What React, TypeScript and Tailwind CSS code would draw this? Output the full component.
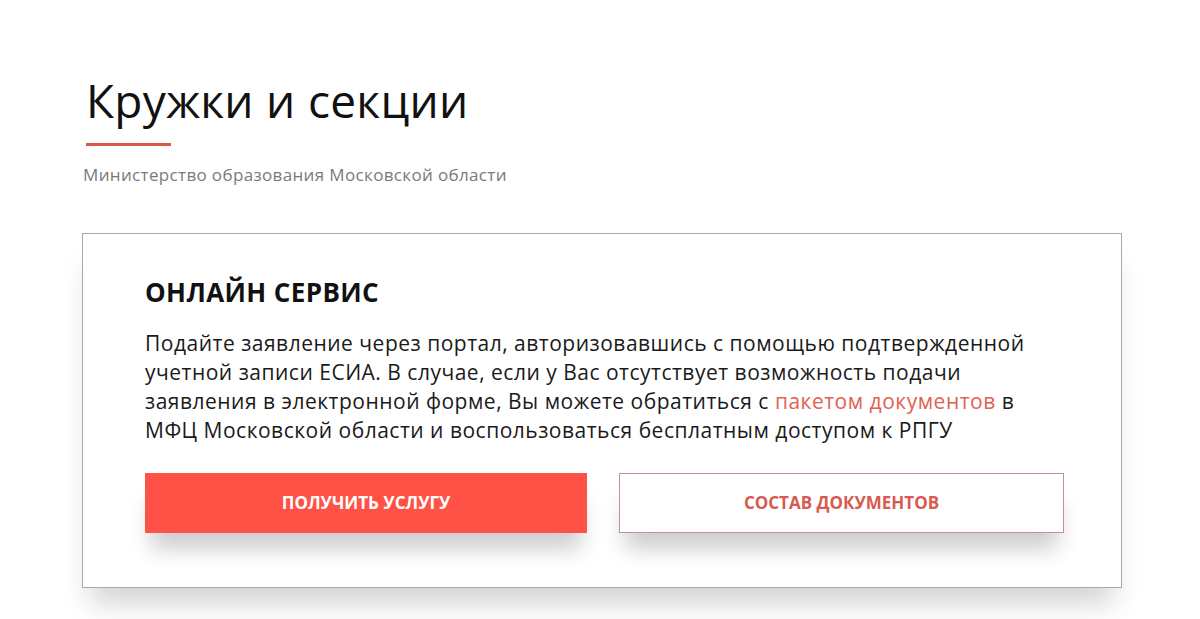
export default function App() {
  return (
    <div className="min-h-screen bg-white font-['Open_Sans',sans-serif] text-black">
      <div className="pl-[82px] pr-[78px] pt-[70px]">
        <h1 className="pl-[4px] text-[46px] font-normal leading-[60px] tracking-[0.3px] text-[#111]">
          Кружки и секции
        </h1>
        <div className="ml-[4px] mt-[13px] h-[3px] w-[85px] bg-[#d9574c]" />
        <p className="mt-[18px] pl-[1px] text-[17px] leading-[22px] tracking-[0.35px] text-[#7a7a7a]">
          Министерство образования Московской области
        </p>

        <div className="mt-[47px] border border-[#a9a9a9] bg-white px-[62px] pb-[54px] pt-[40px] shadow-[0_24px_26px_-8px_rgba(0,0,0,0.17)]">
          <h2 className="text-[26px] font-bold leading-[36px] tracking-[0.4px] text-[#111]">
            ОНЛАЙН СЕРВИС
          </h2>
          <p className="mt-[19px] max-w-[900px] text-[21px] leading-[29px] tracking-[0.5px] text-[#1a1a1a]">
            Подайте заявление через портал, авторизовавшись с помощью
            подтвержденной учетной записи ЕСИА. В случае, если у Вас
            отсутствует возможность подачи заявления в электронной форме, Вы
            можете обратиться с{" "}
            <a className="text-[#e2624f]">пакетом документов</a> в МФЦ
            Московской области и воспользоваться бесплатным доступом к РПГУ
          </p>
          <div className="mt-[28px] grid grid-cols-[442px_445px] gap-[32px]">
            <button className="h-[60px] bg-[#ff5145] text-[17px] font-bold uppercase text-white shadow-[0_22px_22px_-6px_rgba(0,0,0,0.2)]">
              Получить услугу
            </button>
            <button className="h-[60px] border border-[#c49290] bg-white text-[17px] font-bold uppercase text-[#d85a50] shadow-[0_22px_22px_-6px_rgba(0,0,0,0.2)]">
              Состав документов
            </button>
          </div>
        </div>
      </div>
    </div>
  );
}
